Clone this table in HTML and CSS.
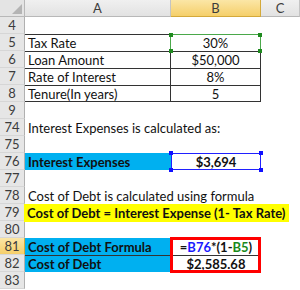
FILE: index.html
```html
<!DOCTYPE html>
<html>
<head>
<meta charset="utf-8">
<link rel="stylesheet" href="styles.css">
</head>
<body>
<div class="sheet">
  <div class="corner"><span class="tri"></span></div>
  <div class="ch">A</div>
  <div class="ch sel">B</div>
  <div class="ch">C</div>

  <div class="rh">4</div><div class="c"></div><div class="c"></div><div class="c"></div>

  <div class="rh">5</div><div class="c t r">Tax Rate</div><div class="c t r ctr cursel">30%<i class="h tl"></i><i class="h tr"></i><i class="h bl"></i><i class="h br"></i></div><div class="c"></div>
  <div class="rh">6</div><div class="c t r">Loan Amount</div><div class="c t r ctr">$50,000</div><div class="c"></div>
  <div class="rh">7</div><div class="c t r">Rate of Interest</div><div class="c t r ctr">8%</div><div class="c"></div>
  <div class="rh">8</div><div class="c t b r">Tenure(In years)</div><div class="c t b r ctr">5</div><div class="c"></div>

  <div class="rh">9</div><div class="c"></div><div class="c"></div><div class="c"></div>
  <div class="rh">74</div><div class="c ov">Interest Expenses is calculated as:</div><div class="c"></div><div class="c"></div>
  <div class="rh">75</div><div class="c"></div><div class="c"></div><div class="c"></div>
  <div class="rh">76</div><div class="c cyan bold">Interest Expenses</div><div class="c ctr bold refsel">$3,694<i class="h tl"></i><i class="h tr"></i><i class="h bl"></i><i class="h br"></i></div><div class="c"></div>
  <div class="rh">77</div><div class="c"></div><div class="c"></div><div class="c"></div>
  <div class="rh">78</div><div class="c ov">Cost of Debt is calculated using formula</div><div class="c"></div><div class="c"></div>
  <div class="rh">79</div><div class="c ov"><span class="hl">Cost of Debt = Interest Expense (1- Tax Rate)</span></div><div class="c"></div><div class="c"></div>
  <div class="rh">80</div><div class="c"></div><div class="c"></div><div class="c"></div>
  <div class="rh sel">81</div><div class="c cyan bold">Cost of Debt Formula</div><div class="c ctr bold redbox"><span>=<span class="fb">B76</span>*(1-<span class="fg">B5</span>)</span></div><div class="c"></div>
  <div class="rh">82</div><div class="c cyan bold t">Cost of Debt</div><div class="c ctr bold t">$2,585.68</div><div class="c"></div>
  <div class="rh">83</div><div class="c"></div><div class="c"></div><div class="c"></div>
</div>
</body>
</html>
```
FILE: styles.css
```css
html, body {
  margin: 0;
  padding: 0;
  background: #fff;
  overflow: hidden;
}
.sheet {
  display: grid;
  grid-template-columns: 25px 146px 90px 39px;
  grid-template-rows: 17px repeat(16, 17px);
  font-family: Lato, "Liberation Sans", sans-serif;
  font-size: 13px;
  color: #111;
  width: 300px;
  height: 290px;
  overflow: hidden;
}
.corner {
  background: #e4e4e4;
  border-right: 1px solid #b8b8b8;
  border-bottom: 1px solid #b8b8b8;
  box-sizing: border-box;
  position: relative;
}
.tri {
  position: absolute;
  right: 2px;
  bottom: 2px;
  width: 0;
  height: 0;
  border-left: 10px solid transparent;
  border-bottom: 10px solid #b4b4b4;
}
.ch {
  background: linear-gradient(#f0f0f0, #e2e2e2);
  border-right: 1px solid #c4c4c4;
  border-bottom: 1px solid #b8b8b8;
  box-sizing: border-box;
  display: flex;
  align-items: center;
  justify-content: center;
  color: #3c3c3c;
}
.ch.sel {
  background: linear-gradient(#fbe6a6, #f5cf6a);
  border-bottom: 1px solid #d4a93a;
  border-right: 1px solid #d4a93a;
}
.rh {
  background: #e6e6e6;
  border-right: 1px solid #b0b0b0;
  border-bottom: 1px solid #d6d6d6;
  box-sizing: border-box;
  display: flex;
  align-items: center;
  justify-content: center;
  color: #3c3c3c;
}
.rh.sel {
  background: linear-gradient(#fbe6a6, #f5cf6a);
  border-right: 1px solid #d4a93a;
}
.c {
  box-sizing: border-box;
  display: flex;
  align-items: center;
  padding-left: 3px;
  white-space: nowrap;
  min-width: 0;
  position: relative;
}
.c.ov { overflow: visible; z-index: 2; }
.t { border-top: 1px solid #333; }
.b { border-bottom: 1px solid #333; }
.r { border-right: 1px solid #333; }
.ctr { justify-content: center; padding-left: 0; }
.bold { font-weight: 700; }
.cyan { background: #00b0f0; }
.hl {
  background: #ffff00;
  font-weight: 700;
  padding: 1px 4px 1px 3px;
  margin-left: -4px;
}
.fb { color: #1a1aff; }
.fg { color: #1a8a1a; }
.cursel::after {
  content: "";
  position: absolute;
  inset: -1px -1px -1px -1px;
  border: 1px solid #4aa84a;
}
.cursel .h { background: #1f8a1f; }
.refsel::after {
  content: "";
  position: absolute;
  inset: 0;
  border: 1px solid #2020ff;
}
.refsel .h { background: #1010ff; }
.h {
  position: absolute;
  width: 4px;
  height: 4px;
  z-index: 3;
}
.h.tl { left: -2px; top: -2px; }
.h.tr { right: -2px; top: -2px; }
.h.bl { left: -2px; bottom: -2px; }
.h.br { right: -2px; bottom: -2px; }
.redbox { z-index: 4; }
.redbox::after {
  content: "";
  position: absolute;
  left: -1px;
  top: -1px;
  right: 0;
  height: 36px;
  border: 3px solid #ff0000;
  box-sizing: border-box;
}
```
